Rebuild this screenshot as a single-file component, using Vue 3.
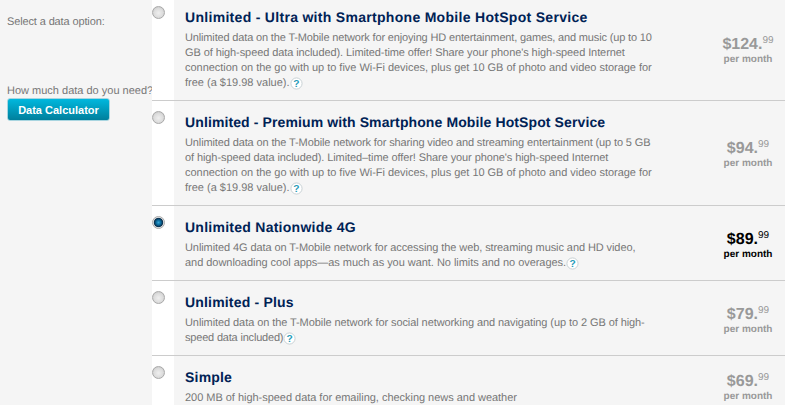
<script setup>
// track = letter-spacing per line, the reference's hinted Arial runs narrower than ours
const plans = [
  {
    id: "ultra",
    title: "Unlimited - Ultra with Smartphone Mobile HotSpot Service",
    titleTrack: 0.3,
    lines: [
      { text: "Unlimited data on the T-Mobile network for enjoying HD entertainment, games, and music (up to 10", track: -0.155 },
      { text: "GB of high-speed data included). Limited-time offer! Share your phone's high-speed Internet", track: -0.087 },
      { text: "connection on the go with up to five Wi-Fi devices, plus get 10 GB of photo and video storage for", track: -0.03 },
      { text: "free (a $19.98 value).", track: 0 },
    ],
    price: "$124.",
    size: "first",
  },
  {
    id: "premium",
    title: "Unlimited - Premium with Smartphone Mobile HotSpot Service",
    titleTrack: 0.11,
    lines: [
      { text: "Unlimited data on the T-Mobile network for sharing video and streaming entertainment (up to 5 GB", track: -0.124 },
      { text: "of high-speed data included). Limited–time offer! Share your phone's high-speed Internet", track: -0.09 },
      { text: "connection on the go with up to five Wi-Fi devices, plus get 10 GB of photo and video storage for", track: -0.03 },
      { text: "free (a $19.98 value).", track: 0 },
    ],
    price: "$94.",
    size: "large",
  },
  {
    id: "nationwide",
    title: "Unlimited Nationwide 4G",
    titleTrack: 0.26,
    lines: [
      { text: "Unlimited 4G data on T-Mobile network for accessing the web, streaming music and HD video,", track: -0.088 },
      { text: "and downloading cool apps—as much as you want. No limits and no overages.", track: -0.04 },
    ],
    price: "$89.",
    selected: true,
  },
  {
    id: "plus",
    title: "Unlimited - Plus",
    titleTrack: 0.18,
    lines: [
      { text: "Unlimited data on the T-Mobile network for social networking and navigating (up to 2 GB of high-", track: -0.082 },
      { text: "speed data included)", track: -0.19 },
    ],
    price: "$79.",
  },
  {
    id: "simple",
    title: "Simple",
    titleTrack: 0.2,
    lines: [{ text: "200 MB of high-speed data for emailing, checking news and weather", track: -0.03 }],
    price: "$69.",
    size: "last",
    noHelp: true,
  },
];
</script>

<template>
  <div class="page">
    <aside class="side">
      <div class="side-label">Select a data option:</div>
      <div class="side-question">How much data do you need?</div>
      <button class="calc-btn" type="button">Data Calculator</button>
    </aside>
    <div class="plans">
      <div v-for="plan in plans" :key="plan.id" class="plan" :class="plan.size">
        <div class="radio-col">
          <span class="radio" :class="{ on: plan.selected }"></span>
        </div>
        <div class="plan-body">
          <div class="plan-main">
            <h3 class="plan-title" :style="{ letterSpacing: plan.titleTrack + 'px' }">{{ plan.title }}</h3>
            <p class="plan-desc">
              <span
                v-for="(line, i) in plan.lines"
                :key="i"
                class="desc-line"
                :style="{ letterSpacing: line.track + 'px' }"
              >{{ line.text }}<svg
                  v-if="!plan.noHelp && i === plan.lines.length - 1"
                  class="help"
                  viewBox="0 0 14 14"
                  width="13"
                  height="13"
                ><circle cx="7" cy="7" r="6" fill="#fff" stroke="#c5ced2" /><text x="7" y="11" text-anchor="middle" class="help-mark">?</text></svg></span>
            </p>
          </div>
          <div class="price" :class="{ on: plan.selected }">
            <div class="amount">{{ plan.price }}<sup>99</sup></div>
            <div class="per">per month</div>
          </div>
        </div>
      </div>
    </div>
  </div>
</template>

<style scoped>
.page {
  display: flex;
  width: 785px;
  height: 405px;
  overflow: hidden;
  background: #f5f5f5;
  font-family: "Liberation Sans", Arial, sans-serif;
  text-rendering: geometricPrecision;
}

.side {
  width: 152px;
  flex: none;
  padding: 16px 0 0 7px;
  box-sizing: border-box;
  color: #777;
  font-size: 11px;
}

.side-label {
  letter-spacing: -0.13px;
}

.side-question {
  margin-top: 57px;
  white-space: nowrap;
}

.calc-btn {
  display: block;
  width: 103px;
  height: 23px;
  margin-top: 1px;
  padding: 0;
  border: 1px solid #a8d5e0;
  border-radius: 3px;
  background: linear-gradient(#00b8de, #007f9c);
  color: #fff;
  font: bold 11px "Liberation Sans", Arial, sans-serif;
}

.plans {
  flex: 1;
}

.plan {
  display: flex;
  height: 75px;
  border-bottom: 1px solid #ccc;
  box-sizing: border-box;
}

.plan.first {
  height: 101px;
}

.plan.large {
  height: 105px;
}

.radio-col {
  width: 22px;
  flex: none;
  background: #fff;
  padding-top: 10px;
}

.first .radio-col {
  padding-top: 6px;
}

.radio {
  display: block;
  width: 11px;
  height: 11px;
  border: 1px solid #a9a9a9;
  border-radius: 50%;
  background: radial-gradient(circle at 50% 55%, #efefef 0, #dcdcdc 55%, #bcbcbc 100%);
}

.radio.on {
  background: radial-gradient(circle at 50% 50%, #35a6d6 0, #0b6a9c 30%, #0b2f4c 55%, #e8e8e8 66%);
}

.plan-body {
  flex: 1;
  display: flex;
  padding: 13px 0 0 11px;
}

.first .plan-body {
  padding-top: 9px;
}

.plan-main {
  width: 527px;
}

.plan-title {
  margin: 0;
  color: #002255;
  font-size: 14px;
  line-height: 17px;
  font-weight: bold;
}

.plan-desc {
  margin: 5px 0 0;
  color: #777;
  font-size: 11px;
  line-height: 15px;
  white-space: nowrap;
}

.desc-line {
  display: block;
  height: 15px;
}

.help {
  vertical-align: -4px;
}

.help-mark {
  fill: #1f9bb8;
  font: bold 11px "Liberation Sans", Arial, sans-serif;
}

.price {
  width: 72px;
  padding-top: 12px;
  text-align: center;
  color: #999;
}

.first .price {
  padding-top: 27px;
}

.large .price {
  padding-top: 26px;
}

.last .price {
  padding-top: 4px;
}

.price.on {
  color: #000;
}

.amount {
  font-size: 16px;
  line-height: 18px;
  font-weight: bold;
}

.amount sup {
  font-size: 10px;
  font-weight: normal;
  line-height: 0;
}

.per {
  font-size: 10px;
  line-height: 12px;
  font-weight: bold;
}
</style>
